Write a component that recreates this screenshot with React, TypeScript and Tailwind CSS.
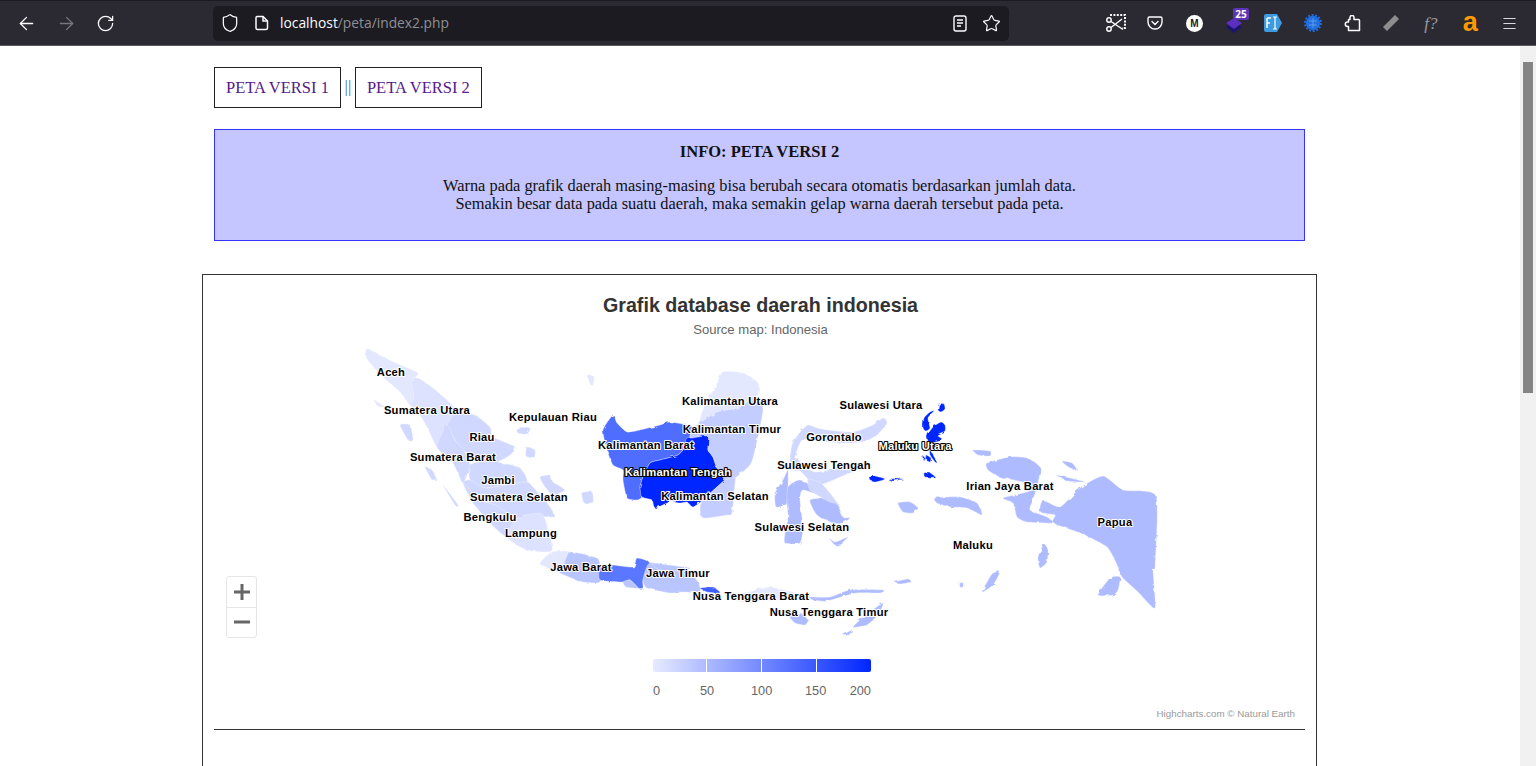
import { useMemo } from "react";
import { ArrowLeft, ArrowRight, RotateCw, Shield, Star, Menu } from "lucide-react";

type Shape = { c: string; p: string };

const land = "#aebbff";
const pale = "#e3e8ff";
const soft = "#d0d8ff";
const mid = "#c4cdff";
const deep = "#0026ff";

const shapes: Shape[] = [
  { c: pale, p: "365,355 368,349 383,357 400,365 418,373 412,382 414,398 410,405 400,392 383,377 370,363" },
  { c: "#dce2ff", p: "412,382 418,378 433,388 450,403 455,412 447,425 443,435 437,447 427,427 417,410 410,405 414,398" },
  { c: soft, p: "450,403 460,413 475,415 490,427 493,437 515,447 510,455 497,462 480,462 465,452 455,440 447,425 455,412" },
  { c: soft, p: "437,447 447,425 455,440 465,452 470,465 463,483 453,463" },
  { c: soft, p: "470,465 480,462 497,462 520,468 527,482 505,485 485,488 470,480" },
  { c: soft, p: "463,483 470,480 485,488 505,485 527,482 533,487 550,507 553,517 525,515 515,520 495,505 480,500" },
  { c: soft, p: "463,483 480,500 495,505 515,520 507,537 490,523 473,503" },
  { c: "#dce2ff", p: "515,520 525,515 543,515 552,550 527,550 507,537" },
  { c: soft, p: "540,477 550,475 553,482 565,490 553,495 545,487" },
  { c: soft, p: "582,493 592,492 593,502 584,503" },
  { c: pale, p: "374,400 385,407 378,406" },
  { c: soft, p: "400,425 410,425 413,440 408,440" },
  { c: soft, p: "425,467 432,470 437,480 432,480" },
  { c: soft, p: "443,485 458,505 455,505" },
  { c: soft, p: "517,428 530,428 527,434 518,433" },
  { c: soft, p: "527,447 535,450 534,458 526,456" },
  { c: pale, p: "588,375 594,377 593,385 590,384" },
  { c: "#4f6dff", p: "613,415 617,423 627,432 640,430 660,425 670,422 687,425 693,428 690,438 685,447 678,455 660,460 650,463 643,477 640,487 642,497 637,500 627,498 623,480 623,470 613,465 607,450 603,430" },
  { c: deep, p: "687,438 708,436 708,450 713,457 717,468 725,480 717,487 703,500 693,507 687,502 680,503 670,502 655,508 652,500 642,497 640,487 643,477 650,463 660,460 678,455 685,447" },
  { c: pale, p: "717,383 723,372 743,373 758,383 757,397 737,408 717,412 700,423 703,410" },
  { c: mid, p: "700,423 717,412 737,408 757,397 763,410 755,450 750,465 735,478 725,480 717,468 713,457 708,450 708,436 690,438 693,428" },
  { c: mid, p: "725,480 735,478 735,483 732,513 727,515 703,518 700,507 703,500 717,487" },
  { c: soft, p: "808,425 817,428 827,430 853,432 873,425 883,418 887,423 877,435 863,442 840,443 817,440 802,440 795,457 797,470 790,465 792,445 800,432" },
  { c: soft, p: "788,470 800,471 810,481 820,485 840,477 860,468 845,463 830,470 815,472 803,466 797,458 792,462" },
  { c: land, p: "783,480 788,470 788,487 787,503 785,505 776,507 775,493" },
  { c: land, p: "788,487 800,480 823,492 825,497 803,490 800,500 803,527 800,543 785,543 785,533 788,517 787,503" },
  { c: land, p: "810,500 828,498 837,503 843,517 850,518 843,523 833,523 817,515" },
  { c: soft, p: "808,479 822,484 838,504 826,500 810,490" },
  { c: land, p: "828,537 835,542 848,537 843,542 842,544 835,545" },
  { c: deep, p: "930,412 934,411 928,418 930,428 926,431 923,428 924,418" },
  { c: deep, p: "939,404 944,404 945,409 941,412 938,410" },
  { c: deep, p: "933,427 941,422 945,425 945,431 937,435 943,440 930,443 927,438 928,434" },
  { c: deep, p: "930,450 937,462 935,462 930,455" },
  { c: deep, p: "922,455 925,458 924,461" },
  { c: deep, p: "926,455 931,458 930,462 926,460" },
  { c: deep, p: "870,477 875,476 885,479 876,482 871,481" },
  { c: deep, p: "888,479 903,479 893,481" },
  { c: deep, p: "924,473 929,472 935,477 925,477" },
  { c: land, p: "1103,476 1123,490 1156,496 1155,567 1153,570 1155,608 1138,592 1122,577 1118,567 1107,547 1080,533 1053,523 1055,515 1040,512 1043,500 1060,507 1080,488" },
  { c: land, p: "987,463 1010,457 1027,458 1040,467 1038,483 1033,500 1030,510 1047,517 1053,523 1027,522 1017,517 1013,503 1003,498 1023,493 1032,490 1027,483 1000,477 988,470" },
  { c: land, p: "935,498 960,497 977,503 982,515 967,508 950,507 937,503" },
  { c: land, p: "898,503 910,502 918,508 913,513 903,512" },
  { c: land, p: "1038,557 1044,544 1048,550 1047,562 1040,568" },
  { c: land, p: "973,450 990,451 990,456 978,455" },
  { c: land, p: "1062,461 1072,463 1077,470 1068,467" },
  { c: land, p: "1056,475 1070,478 1085,482 1068,481" },
  { c: land, p: "1098,595 1110,578 1120,577 1118,590 1113,595" },
  { c: pale, p: "540,563 552,552 570,552 563,567 560,572 545,567" },
  { c: "#b9c5ff", p: "570,552 597,558 600,567 600,582 583,582 560,573 563,567" },
  { c: "#5a78ff", p: "600,567 612,565 633,567 637,558 650,563 643,580 643,588 638,588 630,580 623,582 600,580" },
  { c: "#b9c5ff", p: "623,582 630,580 638,588 626,587" },
  { c: "#b9c5ff", p: "650,563 680,568 697,580 700,592 680,592 670,593 647,588 643,580" },
  { c: "#b9c5ff", p: "652,564 668,565 690,568 680,571 660,570" },
  { c: "#3f5eff", p: "700,588 713,587 720,592 718,593 707,592" },
  { c: pale, p: "725,595 750,592 760,588 775,588 800,594 812,597 806,600 775,600 745,602 735,600" },
  { c: land, p: "810,597 830,597 850,590 883,590 880,593 856,593 827,601 813,600" },
  { c: land, p: "790,617 800,613 808,620 805,625 795,623" },
  { c: land, p: "853,627 863,617 883,603 878,615 867,625 857,627" },
  { c: land, p: "843,635 852,630 849,635" },
  { c: land, p: "895,582 908,579 911,582 900,584" },
  { c: land, p: "982,592 992,574 1000,572 993,585" },
  { c: land, p: "960,583 963,583 963,587 960,587" },
];

const labels: [string, number, number, boolean?][] = [
  ["Aceh", 391, 376],
  ["Sumatera Utara", 427, 414],
  ["Kepulauan Riau", 553, 421],
  ["Riau", 482, 441],
  ["Sumatera Barat", 453, 461],
  ["Jambi", 498, 484],
  ["Sumatera Selatan", 519, 501],
  ["Bengkulu", 490, 521],
  ["Lampung", 531, 537],
  ["Kalimantan Utara", 730, 405],
  ["Kalimantan Timur", 732, 433],
  ["Kalimantan Barat", 646, 449],
  ["Kalimantan Tengah", 678, 476, true],
  ["Kalimantan Selatan", 715, 500],
  ["Sulawesi Utara", 881, 409],
  ["Gorontalo", 834, 441],
  ["Maluku Utara", 915, 450, true],
  ["Sulawesi Tengah", 824, 469],
  ["Irian Jaya Barat", 1010, 490],
  ["Papua", 1115, 526],
  ["Sulawesi Selatan", 802, 531],
  ["Maluku", 973, 549],
  ["Jawa Barat", 581, 571],
  ["Jawa Timur", 678, 577],
  ["Nusa Tenggara Barat", 751, 600],
  ["Nusa Tenggara Timur", 829, 616],
];

function smooth(points: string) {
  const pts = points.split(" ").map((s) => s.split(",").map(Number));
  const n = pts.length;
  let d = `M${pts[0][0]} ${pts[0][1]}`;
  for (let i = 0; i < n; i++) {
    const p0 = pts[(i - 1 + n) % n];
    const p1 = pts[i];
    const p2 = pts[(i + 1) % n];
    const p3 = pts[(i + 2) % n];
    const k = 0.1;
    d += `C${(p1[0] + (p2[0] - p0[0]) * k).toFixed(1)} ${(p1[1] + (p2[1] - p0[1]) * k).toFixed(1)} ${(p2[0] - (p3[0] - p1[0]) * k).toFixed(1)} ${(p2[1] - (p3[1] - p1[1]) * k).toFixed(1)} ${p2[0]} ${p2[1]}`;
  }
  return d + "Z";
}

function MapDrawing() {
  const paths = useMemo(() => shapes.map((s) => ({ c: s.c, d: smooth(s.p) })), []);
  return (
    <svg width="1112" height="295" viewBox="204 345 1112 295" className="block mt-[7px] ml-px">
      <defs>
        <filter id="coast" x="-5%" y="-5%" width="110%" height="110%">
          <feTurbulence type="fractalNoise" baseFrequency="0.16" numOctaves="2" seed="4" />
          <feDisplacementMap in="SourceGraphic" scale="3" />
          <feGaussianBlur stdDeviation="0.35" />
        </filter>
      </defs>
      <g filter="url(#coast)">
        {paths.map((s, i) => (
          <path key={i} d={s.d} fill={s.c} stroke="#f0f3ff" strokeWidth="0.4" strokeLinejoin="round" />
        ))}
      </g>
      {labels.map(([t, x, y, inv]) => (
        <text
          key={t}
          x={x}
          y={y}
          textAnchor="middle"
          fontFamily="'Liberation Sans', sans-serif"
          fontWeight="700"
          fontSize="11.2"
          letterSpacing="0.25"
          fill={inv ? "#ffffff" : "#000000"}
          stroke={inv ? "#000000" : "#ffffff"}
          strokeWidth={inv ? 2.2 : 2}
          strokeLinejoin="round"
          paintOrder="stroke"
        >
          {t}
        </text>
      ))}
    </svg>
  );
}

function ToolbarIcons() {
  return (
    <div className="flex items-center ml-[87px]">
      <div className="w-[39.4px] flex justify-center">
        <svg width="22" height="20" viewBox="0 0 22 20" fill="none" stroke="#fbfbfe" strokeWidth="1.5">
          <path d="M5 2h15v13h-3" strokeDasharray="2 1.4" strokeWidth="2" />
          <circle cx="4" cy="7" r="2.2" />
          <circle cx="4" cy="16" r="2.2" />
          <path d="M6 8.5l12 8M6 14.5L17 6" />
        </svg>
      </div>
      <div className="w-[39.4px] flex justify-center">
        <svg width="16" height="16" viewBox="0 0 16 16" fill="none" stroke="#fbfbfe" strokeWidth="1.4">
          <path d="M2.5 2h11A1.5 1.5 0 0 1 15 3.5V7a7 7 0 0 1-14 0V3.5A1.5 1.5 0 0 1 2.5 2z" />
          <path d="M5 6.5l3 3 3-3" strokeLinecap="round" />
        </svg>
      </div>
      <div className="w-[39.4px] flex justify-center">
        <div className="w-[17px] h-[17px] rounded-full bg-white flex items-center justify-center text-[10px] font-bold text-[#222] font-['Liberation_Sans',sans-serif]">M</div>
      </div>
      <div className="w-[39.4px] flex justify-center relative">
        <svg width="20" height="18" viewBox="0 0 20 18" className="mt-[3px]">
          <path d="M2 11l8-5 8 5-8 6z" fill="#1c1470" />
          <path d="M2 7l8-5 8 5-8 6z" fill="#5b2fc0" />
        </svg>
        <span className="absolute top-[-5px] left-[19px] bg-[#5b35b5] text-white text-[10px] font-bold leading-[12px] px-[2px] rounded-[2px] font-['Open_Sans',sans-serif]">25</span>
      </div>
      <div className="w-[39.4px] flex justify-center">
        <svg width="18" height="18" viewBox="0 0 18 18">
          <path d="M2 0h11l5 9-5 9H2a2 2 0 0 1-2-2V2a2 2 0 0 1 2-2z" fill="#3f9be0" />
          <path d="M3 4h4M3 4v10M3 9h3" stroke="#fff" strokeWidth="1.5" fill="none" />
          <path d="M9 3h4M9 15h4M11 3v12" stroke="#fff" strokeWidth="1.2" fill="none" />
        </svg>
      </div>
      <div className="w-[39.4px] flex justify-center">
        <svg width="18" height="18" viewBox="0 0 18 18">
          <circle cx="9" cy="9" r="7.2" fill="#1f6fe0" />
          <circle cx="9" cy="9" r="8" fill="none" stroke="#1f6fe0" strokeWidth="1.8" strokeDasharray="2 1.6" />
          <path d="M5 7h8M5 11h8M9 4v10" stroke="#6aa6f0" strokeWidth="0.8" />
        </svg>
      </div>
      <div className="w-[39.4px] flex justify-center">
        <svg width="17" height="17" viewBox="0 0 17 17" fill="none" stroke="#fbfbfe" strokeWidth="1.5" strokeLinejoin="round">
          <path d="M6 2.5a2 2 0 0 1 4 0V4.5h4.5a1 1 0 0 1 1 1v10h-11v-4h-1a2.2 2.2 0 0 1 0-4.4h1V4.5H6z" />
        </svg>
      </div>
      <div className="w-[39.4px] flex justify-center">
        <svg width="16" height="16" viewBox="0 0 16 16">
          <path d="M12 0l4 4L4 16l-4-4z" fill="#8d8d90" />
        </svg>
      </div>
      <div className="w-[39.4px] flex justify-center">
        <span className="text-[#9a9a9e] text-[17px] italic leading-none font-['Liberation_Serif',serif]">f?</span>
      </div>
      <div className="w-[39.4px] flex justify-center">
        <span className="text-[#ff9900] text-[27px] font-bold leading-[20px] h-[20px] -mt-[3px] font-['Liberation_Sans',sans-serif]">a</span>
      </div>
      <div className="w-[39.4px] flex justify-center">
        <Menu size={17} color="#d8d8dc" strokeWidth={1.6} />
      </div>
    </div>
  );
}

function Toolbar() {
  return (
    <div className="h-[46px] shrink-0 bg-[#2b2a33] border-t border-[#1c1b22] border-b border-b-[#5a5a60] flex items-center">
      <div className="flex items-center w-[213px] shrink-0 pl-[7px]">
        <div className="w-[39.4px] flex justify-center"><ArrowLeft size={21} color="#fbfbfe" strokeWidth={1.5} /></div>
        <div className="w-[39.4px] flex justify-center"><ArrowRight size={21} color="#77767c" strokeWidth={1.5} /></div>
        <div className="w-[39.4px] flex justify-center"><RotateCw size={19} color="#fbfbfe" strokeWidth={1.6} /></div>
      </div>
      <div className="w-[796px] h-[35px] shrink-0 bg-[#1c1b22] rounded-[5px] flex items-center pl-[7px] pr-[8px]">
        <Shield size={20} color="#fbfbfe" strokeWidth={1.5} />
        <svg width="16" height="16" viewBox="0 0 16 16" fill="none" stroke="#fbfbfe" strokeWidth="1.5" className="ml-[14px]">
          <path d="M3 1.5h6l4.5 4.5v7a1.5 1.5 0 0 1-1.5 1.5H3.5A1.5 1.5 0 0 1 2 13V3a1.5 1.5 0 0 1 1-1.5z" />
          <path d="M9 1.5V6h4.5" />
        </svg>
        <span className="ml-[10px] text-[13.8px] font-['Open_Sans',sans-serif] text-[#fbfbfe]">
          localhost<span className="text-[#8f8f94]">/peta/index2.php</span>
        </span>
        <div className="ml-auto flex items-center gap-[14px]">
          <svg width="16" height="17" viewBox="0 0 16 17" fill="none" stroke="#fbfbfe" strokeWidth="1.4">
            <rect x="2" y="1" width="12" height="15" rx="2" />
            <path d="M5 5h6M5 8h6M5 11h4" />
          </svg>
          <Star size={19} color="#fbfbfe" strokeWidth={1.5} />
        </div>
      </div>
      <ToolbarIcons />
    </div>
  );
}

function Legend() {
  return (
    <div className="w-[218px] ml-[450px] mt-[19px] shrink-0">
      <div className="h-[13px] rounded-[2px] overflow-hidden flex gap-px bg-[linear-gradient(90deg,#e6ebff_0%,#0026ff_100%)]">
        <div className="flex-1 border-r border-white" />
        <div className="flex-1 border-r border-white" />
        <div className="flex-1 border-r border-white" />
        <div className="flex-1" />
      </div>
      <div className="relative h-[14px] mt-[12px] text-[12.8px] leading-[14px] text-[#666666] font-['Liberation_Sans',sans-serif]">
        <span className="absolute left-0">0</span>
        <span className="absolute left-[47px]">50</span>
        <span className="absolute left-[98px]">100</span>
        <span className="absolute left-[152px]">150</span>
        <span className="absolute right-0">200</span>
      </div>
    </div>
  );
}

export default function App() {
  return (
    <div className="h-[766px] overflow-hidden flex flex-col bg-white">
      <Toolbar />
      <div className="flex-1 min-h-0 flex">
        <main className="flex-1 min-w-0 overflow-hidden font-['Liberation_Serif',serif]">
          <div className="w-[1114px] ml-[203px]">
            <div className="ml-[11px] mt-[21px] flex items-center text-[16.5px] h-[41px]">
              <a className="h-[41px] px-[11px] pt-px flex items-center border border-[#222] text-[#551a8b]">PETA VERSI 1</a>
              <span className="w-[14px] text-center text-[#3f5fbf]">||</span>
              <a className="h-[41px] px-[11px] pt-px flex items-center border border-[#222] text-[#551a8b]">PETA VERSI 2</a>
            </div>
            <div className="ml-[11px] w-[1091px] mt-[21px] h-[112px] bg-[#c5c5ff] border border-[#3333ff] text-center text-[#111] pt-[12px]">
              <div className="font-bold text-[16.5px] leading-[20px]">INFO: PETA VERSI 2</div>
              <p className="mt-[15px] text-[16.38px] leading-[18px]">
                Warna pada grafik daerah masing-masing bisa berubah secara otomatis berdasarkan jumlah data.
                <br />
                Semakin besar data pada suatu daerah, maka semakin gelap warna daerah tersebut pada peta.
              </p>
            </div>
            <div className="-ml-px w-[1115px] mt-[33px] h-[600px] border border-[#333] relative flex flex-col font-['Liberation_Sans',sans-serif]">
              <h1 className="mt-[18px] text-center text-[19.7px] leading-[24px] font-bold text-[#333333] pl-[2px]">Grafik database daerah indonesia</h1>
              <div className="mt-[5px] text-center text-[13.1px] leading-[16px] text-[#666666] pl-[2px]">Source map: Indonesia</div>
              <MapDrawing />
              <Legend />
              <div className="mt-[10px] pr-[21px] text-right text-[9.8px] leading-[12px] text-[#999999]">Highcharts.com © Natural Earth</div>
              <hr className="ml-[11px] mr-[11px] mt-[9px] border-t border-[#333]" />
              <div className="absolute left-[23px] top-[301px] w-[31px] h-[62px] bg-white border border-[#e6e6e6] rounded-[3px] flex flex-col">
                <div className="flex-1 flex items-center justify-center border-b border-[#e6e6e6]">
                  <svg width="18" height="18" viewBox="0 0 18 18"><path d="M9 1v16M1 9h16" stroke="#666" strokeWidth="3" /></svg>
                </div>
                <div className="flex-1 flex items-center justify-center">
                  <svg width="18" height="18" viewBox="0 0 18 18"><path d="M1 9h16" stroke="#666" strokeWidth="3" /></svg>
                </div>
              </div>
            </div>
          </div>
        </main>
        <div className="w-[16px] shrink-0 bg-[#f1f1f1] pt-[16px]">
          <div className="w-[10px] h-[331px] ml-[3px] bg-[#858585]" />
        </div>
      </div>
    </div>
  );
}
